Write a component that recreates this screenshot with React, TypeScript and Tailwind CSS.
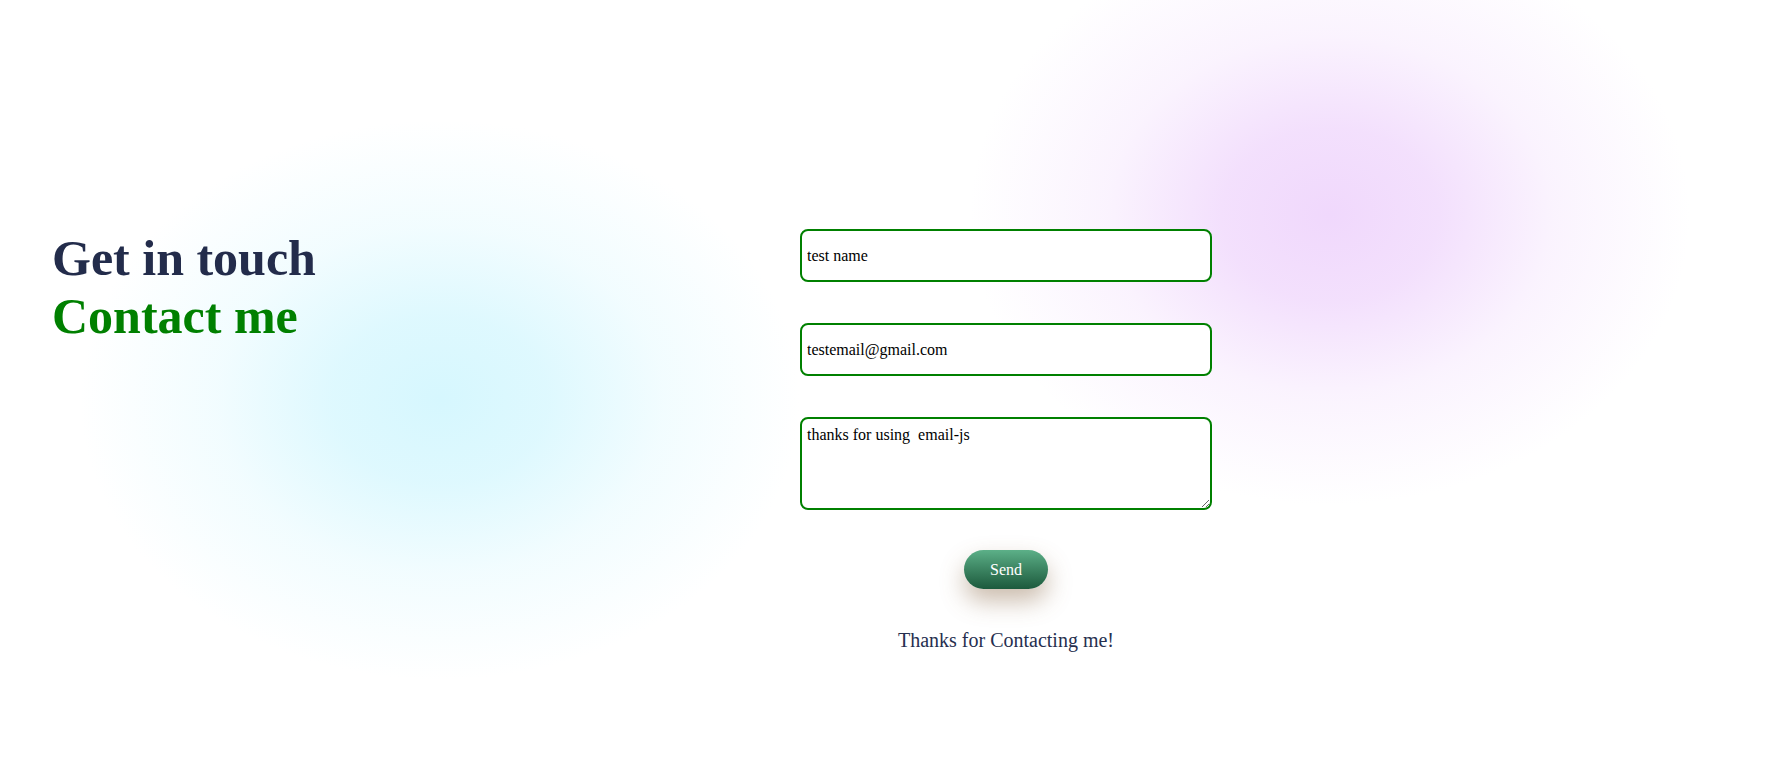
import React from "react";

export default function App() {
  return (
    <div
      className="min-h-screen w-full bg-white bg-[radial-gradient(ellipse_360px_280px_at_440px_400px,#d6f7fe_0%,rgba(214,247,254,0.8)_30%,rgba(214,247,254,0.32)_62%,rgba(214,247,254,0)_100%),radial-gradient(ellipse_360px_290px_at_1330px_215px,#f0d8fc_0%,rgba(240,216,252,0.8)_30%,rgba(240,216,252,0.3)_62%,rgba(240,216,252,0)_100%)]"
      style={{ fontFamily: '"Liberation Serif", "Times New Roman", serif' }}
    >
      <div className="flex items-start pl-[52px] pt-[229px] pb-[100px]">
        <div className="w-[748px] shrink-0">
          <h1 className="text-[50px] leading-[58px] font-bold text-[#232c4b]">Get in touch</h1>
          <h1 className="text-[50px] leading-[58px] font-bold text-[#008000]">Contact me</h1>
        </div>
        <form className="flex w-[412px] shrink-0 flex-col items-center" onSubmit={(e) => e.preventDefault()}>
          <input
            type="text"
            defaultValue="test name"
            className="h-[53px] w-full rounded-lg border-2 border-[#008000] bg-white px-[5px] text-[16px] text-black outline-none"
          />
          <input
            type="email"
            defaultValue="testemail@gmail.com"
            className="mt-[41px] h-[53px] w-full rounded-lg border-2 border-[#008000] bg-white px-[5px] text-[16px] text-black outline-none"
          />
          <textarea
            defaultValue="thanks for using  email-js"
            className="mt-[41px] h-[93px] w-full rounded-lg border-2 border-[#008000] bg-white px-[5px] pt-[4px] text-[16px] text-black outline-none"
          />
          <button
            type="submit"
            className="mt-[40px] h-[39px] w-[84px] rounded-full bg-gradient-to-b from-[#5cb088] to-[#1c5a3d] text-[16px] text-white shadow-[0_12px_24px_rgba(130,95,60,0.42)]"
          >
            Send
          </button>
          <p className="mt-[40px] text-[20px] leading-[23px] text-[#262f4f]">Thanks for Contacting me!</p>
        </form>
      </div>
    </div>
  );
}
